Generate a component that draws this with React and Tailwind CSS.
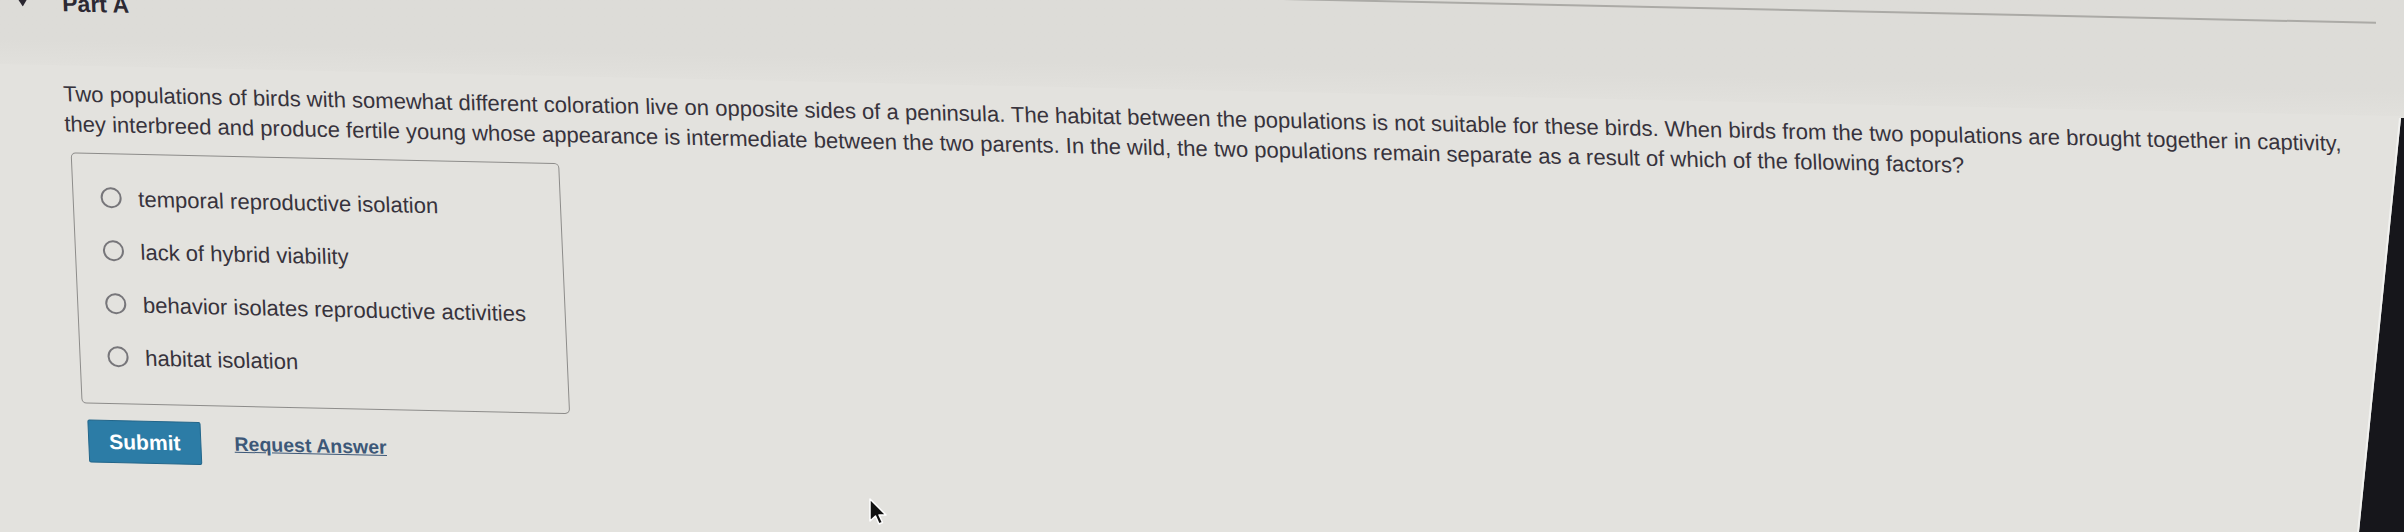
const OPTIONS = [
  'temporal reproductive isolation',
  'lack of hybrid viability',
  'behavior isolates reproductive activities',
  'habitat isolation',
];

export default function App() {
  return (
    <div className="relative h-[532px] w-[2404px] overflow-hidden bg-[#e3e2de] font-['Liberation_Sans',Arial,sans-serif] text-[#37333c]">
      {/* NOTE: the photo is taken at an angle, so the page is skewed a bit */}
      <div className="-mt-[60px] origin-[0_60px] skew-x-[2.5deg] skew-y-[1.25deg]">
        <PartHeader />
        <Question />
        <AnswerBox />
        <Actions />
      </div>
      <ScreenEdge />
      <Cursor />
    </div>
  );
}

function PartHeader() {
  return (
    <div className="-ml-[40px] h-[124px] bg-linear-to-b from-[#dddcd8] from-80% to-[#e1e0dc] pl-[40px] pt-[30px]">
      <div className="h-[2px] w-[2375px] bg-[#abaaa6]" />
      <div className="mt-[19px] flex items-start">
        <svg className="ml-[15px] mt-[3px] h-[12px] w-[15px]" viewBox="0 0 15 12">
          <path d="M0 0 L15 0 L7.5 12 Z" fill="#2a2730" />
        </svg>
        <h3 className="ml-[32px] text-[23px] font-bold leading-[23px] text-[#2c2933]">
          Part A
        </h3>
      </div>
    </div>
  );
}

function Question() {
  return (
    <p className="whitespace-nowrap pl-[59px] pt-[14px] text-[22px] leading-[30px]">
      Two populations of birds with somewhat different coloration live on
      opposite sides of a peninsula. The habitat between the populations is not
      suitable for these birds. When birds from the two populations are brought
      together in captivity,
      <br />
      they interbreed and produce fertile young whose appearance is intermediate
      between the two parents. In the wild, the two populations remain separate
      as a result of which of the following factors?
    </p>
  );
}

function AnswerBox() {
  return (
    <div className="ml-[64px] mt-[12.5px] h-[251px] w-[488px] rounded-[5px] border-[1.5px] border-[#8d8c8a] pt-[17px]">
      {OPTIONS.map((label) => (
        <label key={label} className="flex h-[53px] items-center pl-[26.5px]">
          <span className="h-[21px] w-[21px] shrink-0 rounded-full border-2 border-[#77767a]" />
          <span className="ml-[17px] mt-[3px] whitespace-nowrap text-[22px] leading-[26px]">
            {label}
          </span>
        </label>
      ))}
    </div>
  );
}

function Actions() {
  return (
    <div className="mt-[16.5px] flex items-center">
      <button className="ml-[69px] h-[43px] w-[113px] rounded-[2px] border border-[#23668a] bg-[#2c7ca6] text-[21px] font-bold text-white">
        Submit
      </button>
      <a className="ml-[33px] text-[19.5px] font-bold text-[#3d5878] underline">
        Request Answer
      </a>
    </div>
  );
}

function ScreenEdge() {
  return (
    <svg className="absolute right-0 top-0 h-[532px] w-[60px]" viewBox="0 0 60 532">
      <polygon points="57,118 60,118 60,532 15,532" fill="#16161b" />
      <line x1="56" y1="118" x2="14" y2="532" stroke="#f2f2f0" strokeWidth="2" />
    </svg>
  );
}

function Cursor() {
  return (
    <svg className="absolute left-[868px] top-[497px] h-[30px] w-[22px]" viewBox="0 0 22 30">
      <path
        d="M2 2 L2 24 L7.5 19 L11 27 L14.5 25.5 L11 18 L18 18 Z"
        fill="#111"
        stroke="#fff"
        strokeWidth="1.5"
        strokeLinejoin="round"
      />
    </svg>
  );
}
